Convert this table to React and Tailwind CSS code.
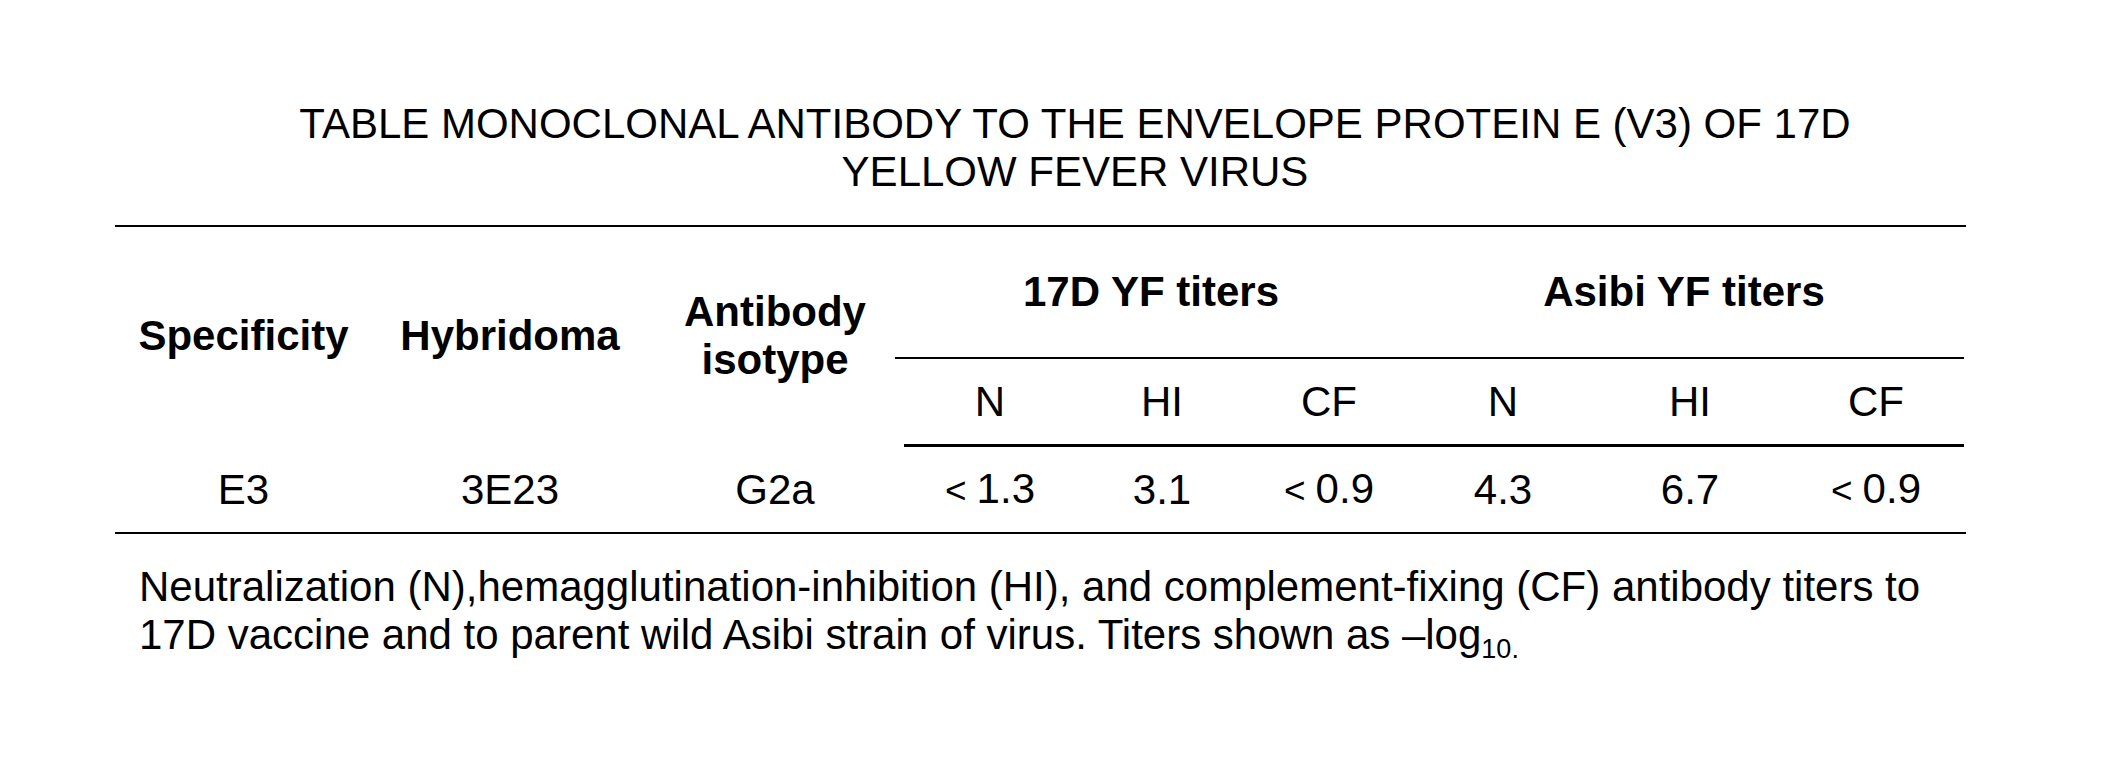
const titers = [
  { label: "N", value: "1.3", lt: true },
  { label: "HI", value: "3.1" },
  { label: "CF", value: "0.9", lt: true },
  { label: "N", value: "4.3" },
  { label: "HI", value: "6.7" },
  { label: "CF", value: "0.9", lt: true },
];

const App = () => {
  return (
    <div className="w-[2123px] h-[758px] bg-white text-black font-['Liberation_Sans',Arial,sans-serif] text-[42px] leading-[48px] pt-[100px] overflow-hidden">
      <h1 className="w-[1600px] ml-[275px] text-center font-normal">
        TABLE MONOCLONAL ANTIBODY TO THE ENVELOPE PROTEIN E (V3) OF 17D YELLOW FEVER VIRUS
      </h1>

      <div className="w-[1851px] ml-[115px] mt-[29px] border-t-2 border-b-2 border-black">
        <div className="grid grid-cols-[257px_276px_254px_176px_168px_166px_182px_192px_180px] grid-rows-[130px_2px_85px_3px_85px] text-center">
          <div className="row-span-3 flex items-center justify-center font-bold">
            Specificity
          </div>
          <div className="row-span-3 flex items-center justify-center font-bold">
            Hybridoma
          </div>
          <div className="row-span-3 flex items-center justify-center font-bold">
            Antibody
            <br />
            isotype
          </div>
          <div className="col-span-3 flex items-center justify-center pr-[12px] font-bold">
            17D YF titers
          </div>
          <div className="col-span-3 flex items-center justify-center pr-[10px] font-bold">
            Asibi YF titers
          </div>

          <div className="col-start-4 col-end-10 -ml-[7px] mr-[2px] bg-black" />

          {titers.map((t, i) => (
            <div key={`h${i}`} className="flex items-center justify-center">
              {t.label}
            </div>
          ))}

          <div className="col-start-4 col-end-10 ml-[2px] mr-[2px] bg-black" />

          <div className="col-start-1 flex items-center justify-center">E3</div>
          <div className="flex items-center justify-center">3E23</div>
          <div className="flex items-center justify-center">G2a</div>
          {titers.map((t, i) => (
            <div key={`v${i}`} className="flex items-center justify-center">
              <span>
                {t.lt && <span className="text-[37px] mr-[10px]">&lt;</span>}
                {t.value}
              </span>
            </div>
          ))}
        </div>
      </div>

      <p className="w-[1851px] ml-[115px] pl-[24px] mt-[29px]">
        Neutralization (N),hemagglutination-inhibition (HI), and complement-fixing (CF) antibody titers to 17D vaccine and to parent wild Asibi strain of virus. Titers shown as –log
        <span className="text-[27px] align-[-9px]">10.</span>
      </p>
    </div>
  );
};

export default App;
